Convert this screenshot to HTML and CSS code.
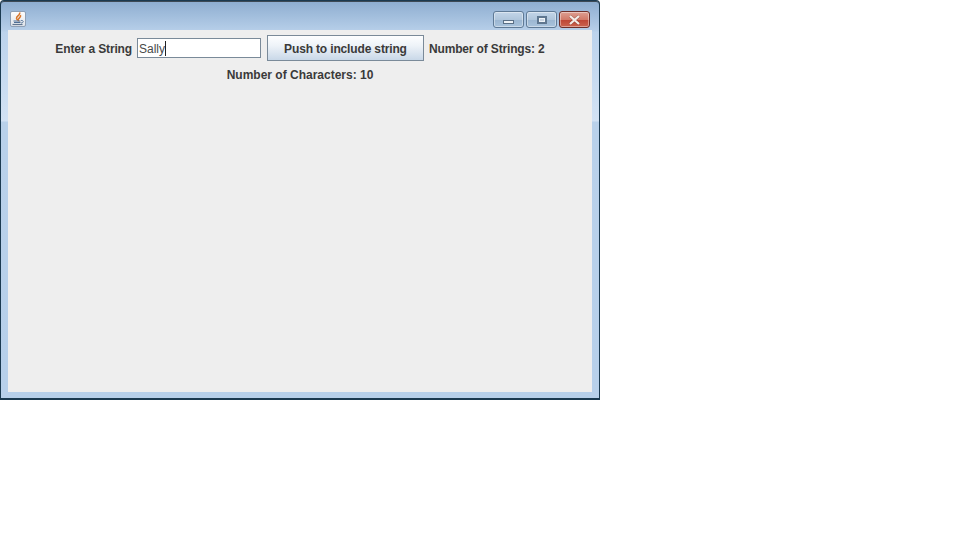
FILE: index.html
```html
<!DOCTYPE html>
<html>
<head>
    <title>String Counter</title>
    <link rel="stylesheet" href="styles.css">
</head>
<body>
    <div class="window">
        <div class="titlebar">
            <div class="app-icon">
                <svg width="14" height="14" viewBox="0 0 14 14">
                    <path d="M8.5 0.5 C10 3 5 4 5.5 6.5 C5.8 7.5 6.5 8 7.2 8.3 C6.5 6.5 10.5 5.5 9.5 3" fill="none" stroke="#d9772b" stroke-width="1.5"/>
                    <path d="M2.5 9 H9.5 M3 10.5 H9.5" stroke="#4f6f96" stroke-width="1" fill="none"/>
                    <path d="M10 8.5 C13 8 13 11 10 11" stroke="#4f6f96" stroke-width="0.9" fill="none"/>
                    <path d="M1.5 12.5 H11.5" stroke="#5f7590" stroke-width="1.2"/>
                </svg>
            </div>
            <div class="controls">
                <div class="ctl"><span class="glyph-min"></span></div>
                <div class="ctl"><span class="glyph-max"></span></div>
                <div class="ctl ctl-close">
                    <svg width="13" height="10" viewBox="0 0 13 10">
                        <path d="M2 1 L11 9 M11 1 L2 9" stroke="#4a1d18" stroke-width="3.2" opacity="0.35"/>
                        <path d="M2 1 L11 9 M11 1 L2 9" stroke="#f3ece8" stroke-width="2.3"/>
                    </svg>
                </div>
            </div>
        </div>
        <div class="content">
            <div class="flow-row first">
                <span class="label">Enter a String</span>
                <div class="text-field"><span>Sally</span><i class="caret"></i></div>
                <button class="push-btn">Push to include string</button>
                <span class="label">Number of Strings: 2</span>
            </div>
            <div class="flow-row second">
                <span class="label">Number of Characters: 10</span>
            </div>
        </div>
    </div>
</body>
</html>
```

FILE: styles.css
```css
html, body {
    margin: 0;
    padding: 0;
    background: #fff;
}

body {
    width: 960px;
    height: 540px;
    overflow: hidden;
    font-family: "Liberation Sans", Arial, sans-serif;
}

.window {
    width: 600px;
    height: 400px;
    box-sizing: border-box;
    display: flex;
    flex-direction: column;
    border: 1px solid #1b3a50;
    border-bottom-width: 2px;
    border-radius: 4px 4px 0 0;
    padding: 0 7px 6px;
    background: linear-gradient(to bottom, #8dadd0 0, #b7cfe9 30px, #bcd3ec 31px, #d2e2f4 120px, #b9d1ea 121px, #b7d0ea 100%);
    box-shadow: inset 0 1px 0 #3d4a55;
}

.titlebar {
    height: 29px;
    flex: none;
    display: flex;
    align-items: flex-start;
    justify-content: space-between;
}

.app-icon {
    width: 14px;
    height: 14px;
    margin: 10px 0 0 2px;
    border: 1px solid #8fa0b5;
    border-radius: 2px;
    background: linear-gradient(to bottom, #fdfdfd, #dfe4ea);
}

.controls {
    display: flex;
    gap: 2px;
    margin: 10px 2px 0 0;
}

.ctl {
    width: 31px;
    height: 17px;
    box-sizing: border-box;
    display: flex;
    align-items: center;
    justify-content: center;
    border: 1px solid #5f7a96;
    border-radius: 3px;
    background: linear-gradient(to bottom, #c3d5e8 0, #b0c6dc 50%, #9bb6d1 51%, #a9c3dc 100%);
    box-shadow: inset 0 0 0 1px rgba(255, 255, 255, 0.4);
}

.ctl-close {
    border-color: #6e2f2a;
    background: linear-gradient(to bottom, #dd9f92 0, #d27a69 50%, #bd4433 51%, #cb6450 100%);
}

.glyph-min {
    width: 9px;
    height: 2px;
    margin-top: 5px;
    border: 1px solid #5a6f86;
    background: #eef2f6;
}

.glyph-max {
    width: 4px;
    height: 2px;
    border: 1px solid #eef2f6;
    outline: 2px solid #5f7790;
    outline-offset: 0;
    background: #c9d6e3;
}

.content {
    flex: 1;
    padding-top: 5px;
    background: #eeeeee;
}

.flow-row {
    display: flex;
    align-items: center;
    justify-content: center;
    gap: 5px;
    height: 26px;
}

.first .label {
    letter-spacing: -0.15px;
    padding-top: 2px;
}

.second {
    margin-top: 1px;
}

.label {
    font-size: 12px;
    font-weight: bold;
    color: #3a3a3a;
    white-space: nowrap;
}

.text-field {
    width: 124px;
    height: 20px;
    box-sizing: border-box;
    display: flex;
    align-items: center;
    padding: 2px 0 0 1px;
    border: 1px solid #7a8a99;
    background: #fff;
    font-size: 12px;
    color: #4a4a4a;
}

.caret {
    width: 1px;
    height: 15px;
    margin-top: -1px;
    background: #222;
}

.push-btn {
    width: 157px;
    height: 26px;
    margin: 0 0 0 1px;
    padding: 2px 0 0;
    border: 1px solid #7a8a99;
    background: linear-gradient(to bottom, #fdfeff 0, #eef3f8 40%, #c9d8e8 100%);
    font-family: inherit;
    font-size: 12px;
    font-weight: bold;
    letter-spacing: -0.15px;
    color: #3a3a3a;
}
```
